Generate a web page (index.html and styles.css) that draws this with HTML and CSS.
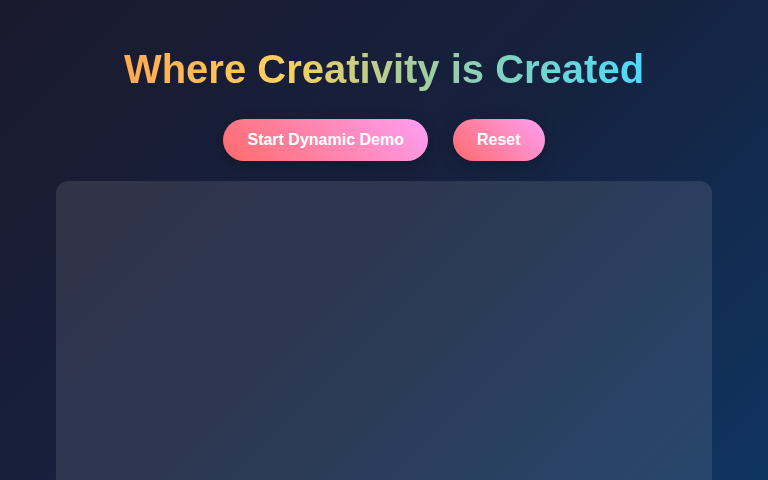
FILE: index.html
```html
<!DOCTYPE html>
<html lang="en">
<head>
<meta charset="utf-8">
<title>Where Creativity is Created</title>
<link rel="stylesheet" href="styles.css">
</head>
<body>
<div class="page">
  <h1 class="title">Where Creativity is Created</h1>
  <div class="controls">
    <button class="btn">Start Dynamic Demo</button>
    <button class="btn">Reset</button>
  </div>
  <div class="stage"></div>
</div>
</body>
</html>
```

FILE: styles.css
```css
html, body {
  margin: 0;
  padding: 0;
  height: 100%;
}
body {
  background: linear-gradient(135deg, #1a1a2e 0%, #16213e 50%, #0f3460 100%);
  font-family: "Liberation Sans", Arial, sans-serif;
  overflow: hidden;
}
.page {
  padding: 46px 56px 0;
  display: flex;
  flex-direction: column;
  align-items: stretch;
}
.title {
  margin: 0 0 27px;
  font-size: 40px;
  line-height: 46px;
  font-weight: bold;
  text-align: center;
  white-space: nowrap;
  background: linear-gradient(90deg, #ffa952 0%, #fdd05c 30%, #a7cc9a 55%, #48dbfb 100%);
  -webkit-background-clip: text;
  background-clip: text;
  color: transparent;
  width: fit-content;
  align-self: center;
}
.controls {
  display: flex;
  justify-content: center;
  gap: 25px;
}
.btn {
  border: none;
  border-radius: 25px;
  padding: 12px 24px;
  font-family: "Liberation Sans", Arial, sans-serif;
  font-size: 16px;
  line-height: 18px;
  font-weight: bold;
  color: #fff;
  background: linear-gradient(45deg, #ff6b6b, #ff9ff3);
  box-shadow: 0 4px 15px rgba(0, 0, 0, 0.25);
  cursor: pointer;
}
.stage {
  margin-top: 20px;
  height: 400px;
  border-radius: 12px;
  background: rgba(255, 255, 255, 0.1);
}
```
